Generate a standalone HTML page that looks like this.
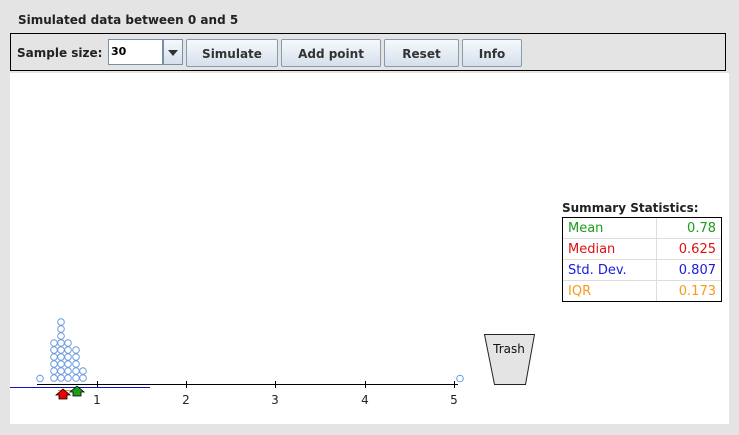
<!DOCTYPE html>
<html><head><style>
body{margin:0;width:739px;height:435px;background:#e4e4e4;position:relative;overflow:hidden;font-family:"DejaVu Sans","Liberation Sans",sans-serif;}
.t{position:absolute;font-size:12px;font-weight:bold;color:#222;}
.bar{position:absolute;left:10px;top:33px;width:714px;height:36px;border:1px solid #000;background:#e4e4e4;}
.btn{position:absolute;top:5px;height:28px;border:1px solid #8a9bb0;border-radius:2px;background:linear-gradient(#f6f9fc,#d5e0ec);font-size:12px;font-weight:bold;color:#333;text-align:center;line-height:28px;box-sizing:border-box;}
.panel{position:absolute;left:10px;top:73px;width:719px;height:351px;background:#fff;}
.tw{position:absolute;left:562px;top:217px;width:158px;height:83px;border:1px solid #000;overflow:hidden}
table{border-collapse:collapse;width:158px;font-size:13px;}
td{border:1px solid #ddd;height:20px;padding:0 5px;}
tr:first-child td{border-top:none}
tr:last-child td{border-bottom:none}
td:first-child{border-left:none}
td:last-child{border-right:none}
td.r{text-align:right;}
</style></head><body>
<div class="t" style="left:18px;top:13px">Simulated data between 0 and 5</div>
<div class="bar">
<div class="t" style="left:6px;top:12px;position:absolute">Sample size:</div>
<div style="position:absolute;left:97px;top:5px;width:55px;height:26px;border:1px solid #7a8ea8;background:#fff;font-size:11px;font-weight:bold;line-height:24px;padding-left:2px;box-sizing:border-box">30</div>
<div style="position:absolute;left:152px;top:5px;width:20px;height:26px;border:1px solid #7a8ea8;background:linear-gradient(#f6f9fc,#d5e0ec);box-sizing:border-box"><div style="position:absolute;left:4px;top:10px;border-left:5px solid transparent;border-right:5px solid transparent;border-top:6px solid #333"></div></div>
<div class="btn" style="left:175px;width:92px">Simulate</div>
<div class="btn" style="left:270px;width:100px">Add point</div>
<div class="btn" style="left:373px;width:75px">Reset</div>
<div class="btn" style="left:451px;width:60px">Info</div>
</div>
<div class="panel"></div>
<div class="t" style="left:562px;top:201px">Summary Statistics:</div>
<div class="tw"><table>
<tr style="color:#1a9e1a"><td>Mean</td><td class="r">0.78</td></tr>
<tr style="color:#e01010"><td>Median</td><td class="r">0.625</td></tr>
<tr style="color:#1a1ae0"><td>Std. Dev.</td><td class="r">0.807</td></tr>
<tr style="color:#f59a1a"><td>IQR</td><td class="r">0.173</td></tr>
</table></div>
<svg style="position:absolute;left:0;top:0" width="739" height="435">
<g fill="none" stroke="#6a9be0">
<circle cx="40" cy="378.5" r="3.3"/>
<circle cx="460" cy="378.5" r="3.3"/>
<circle cx="54" cy="378" r="3.3"/><circle cx="54" cy="371" r="3.3"/><circle cx="54" cy="364" r="3.3"/><circle cx="54" cy="357" r="3.3"/><circle cx="54" cy="350" r="3.3"/><circle cx="54" cy="343" r="3.3"/>
<circle cx="61" cy="378" r="3.3"/><circle cx="61" cy="371" r="3.3"/><circle cx="61" cy="364" r="3.3"/><circle cx="61" cy="357" r="3.3"/><circle cx="61" cy="350" r="3.3"/><circle cx="61" cy="343" r="3.3"/><circle cx="61" cy="336" r="3.3"/><circle cx="61" cy="329" r="3.3"/><circle cx="61" cy="322" r="3.3"/>
<circle cx="68" cy="378" r="3.3"/><circle cx="68" cy="371" r="3.3"/><circle cx="68" cy="364" r="3.3"/><circle cx="68" cy="357" r="3.3"/><circle cx="68" cy="350" r="3.3"/><circle cx="68" cy="343" r="3.3"/>
<circle cx="76" cy="378" r="3.3"/><circle cx="76" cy="371" r="3.3"/><circle cx="76" cy="364" r="3.3"/><circle cx="76" cy="357" r="3.3"/><circle cx="76" cy="350" r="3.3"/>
<circle cx="83" cy="378" r="3.3"/><circle cx="83" cy="371" r="3.3"/>
</g>
<line x1="37" y1="384.5" x2="458" y2="384.5" stroke="#000"/>
<g stroke="#000"><line x1="97.5" y1="381" x2="97.5" y2="388"/><line x1="186.5" y1="381" x2="186.5" y2="388"/><line x1="275.5" y1="381" x2="275.5" y2="388"/><line x1="365.5" y1="381" x2="365.5" y2="388"/><line x1="454.5" y1="381" x2="454.5" y2="388"/></g>
<line x1="10" y1="387.5" x2="150" y2="387.5" stroke="#1010d0"/>
<line x1="58" y1="390.5" x2="76" y2="390.5" stroke="#f59a1a"/>
<path d="M56 395 L63 389 L70 395 L67 395 L67 399 L59 399 L59 395 Z" fill="#e00" stroke="#000" stroke-width="0.8"/>
<path d="M70 392 L77 386 L84 392 L81 392 L81 396 L73 396 L73 392 Z" fill="#1a9e1a" stroke="#000" stroke-width="0.8"/>
<g font-family="DejaVu Sans,sans-serif" font-size="12" fill="#222" text-anchor="middle">
<text x="97" y="404">1</text><text x="186" y="404">2</text><text x="275" y="404">3</text><text x="365" y="404">4</text><text x="454" y="404">5</text>
</g>
<path d="M484.5 334.5 L534.5 334.5 L525.5 384.5 L494.5 384.5 Z" fill="#e4e4e4" stroke="#222"/>
<text x="509" y="353" font-family="DejaVu Sans,sans-serif" font-size="12" fill="#111" text-anchor="middle">Trash</text>
</svg>
</body></html>
